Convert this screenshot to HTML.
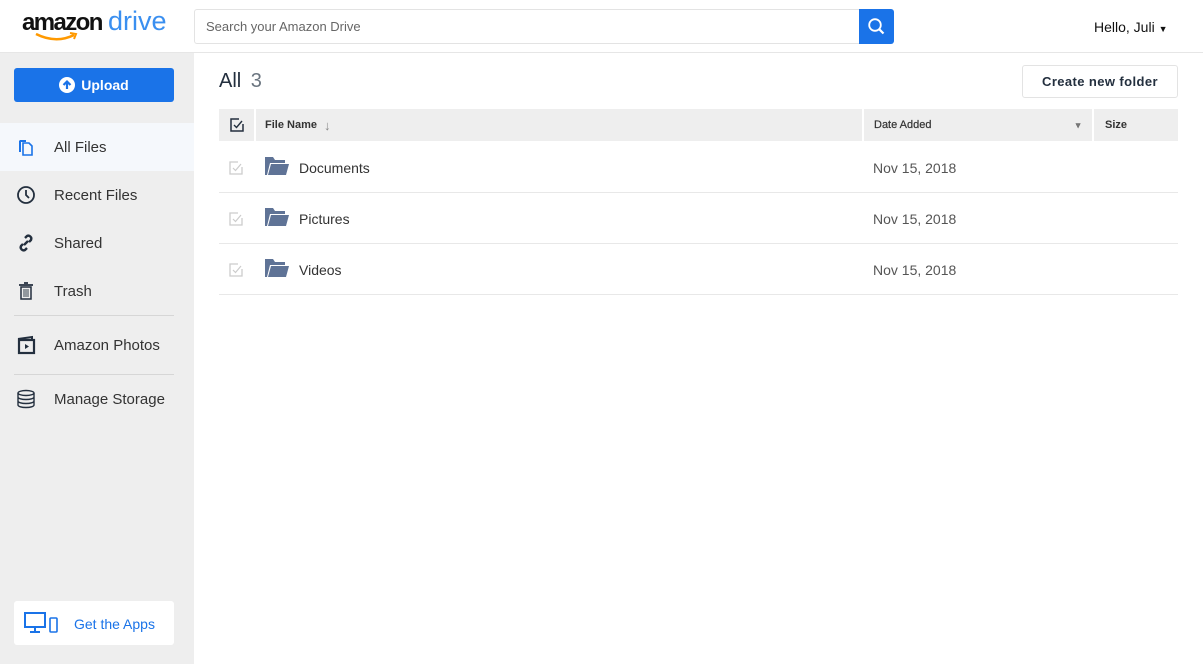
<!DOCTYPE html>
<html><head><meta charset="utf-8"><style>
*{box-sizing:border-box;margin:0;padding:0}
body{width:1203px;height:664px;overflow:hidden;font-family:"Liberation Sans",Arial,sans-serif;background:#fff;position:relative;color:#232f3e}
.abs{position:absolute}
#hdr{left:0;top:0;width:1203px;height:53px;border-bottom:1px solid #e6e6e6;background:#fff}
#side{left:0;top:53px;width:194px;height:611px;background:#eeeeee}
.nav{position:absolute;left:0;width:194px;height:48px;display:flex;align-items:center;font-size:15px;color:#333}
.nav svg{position:absolute;left:16px}
.nav span{position:absolute;left:54px}
.th{position:absolute;top:109px;height:32px;background:#eeeeee;font-size:11px;font-weight:bold;color:#333;display:flex;align-items:center}
.row{position:absolute;left:219px;width:959px;height:51px;border-bottom:1px solid #e8e8e8;font-size:14px;color:#333}
.row .cb{position:absolute;left:10px;top:19px}
.row .fo{position:absolute;left:45px;top:14px}
.row .nm{position:absolute;left:80px;top:18px}
.row .dt{position:absolute;left:654px;top:18px;color:#555}
</style></head><body>
<div id="hdr" class="abs">
 <div class="abs" style="left:22px;top:9px;font-size:24px;font-weight:bold;color:#111;letter-spacing:-1.6px">amazon</div>
 <div class="abs" style="left:108px;top:6px;font-size:27px;color:#3a8ff0">drive</div>
 <svg class="abs" style="left:34px;top:31px" width="46" height="12" viewBox="0 0 46 12"><path d="M2 3 Q22 13 40 4" stroke="#f90" stroke-width="2.5" fill="none"/><path d="M36 2 L42 3 L40 8" stroke="#f90" stroke-width="2" fill="none"/></svg>
 <div class="abs" style="left:194px;top:9px;width:666px;height:35px;border:1px solid #e3e3e3;border-radius:3px 0 0 3px;font-size:13px;color:#666;padding:9px 0 0 11px">Search your Amazon Drive</div>
 <div class="abs" style="left:859px;top:9px;width:35px;height:35px;background:#1a73e8;border-radius:0 3px 3px 0"><svg width="35" height="35" viewBox="0 0 35 35"><circle cx="16" cy="16" r="5.8" stroke="#fff" stroke-width="1.8" fill="none"/><path d="M20.2 20.2 L24.5 24.5" stroke="#fff" stroke-width="2.2"/></svg></div>
 <div class="abs" style="left:1094px;top:19px;font-size:14px;color:#111">Hello, Juli <span style="font-size:9px">▼</span></div>
</div>
<div id="side" class="abs">
 <div class="abs" style="left:14px;top:15px;width:160px;height:34px;background:#1a73e8;border-radius:3px;color:#fff;font-weight:bold;font-size:14px;display:flex;align-items:center;justify-content:center">
  <svg width="16" height="16" viewBox="0 0 16 16" style="margin-right:6px"><circle cx="8" cy="8" r="8" fill="#fff"/><path d="M8 12V5M4.5 8 8 4.5 11.5 8" stroke="#1a73e8" stroke-width="2.2" fill="none"/></svg>Upload</div>
 <div class="nav" style="top:70px;background:#f5f8fc"><svg width="20" height="20" viewBox="0 0 20 20"><path d="M4 3h6v2H5v10H3V4z" fill="#1a73e8"/><path d="M7 6h6l3 3v9H7z" stroke="#1a73e8" stroke-width="1.6" fill="none"/></svg><span>All Files</span></div>
 <div class="nav" style="top:118px"><svg width="20" height="20" viewBox="0 0 20 20"><circle cx="10" cy="10" r="8" stroke="#232f3e" stroke-width="1.8" fill="none"/><path d="M10 5v5l3 3" stroke="#232f3e" stroke-width="1.8" fill="none"/></svg><span>Recent Files</span></div>
 <div class="nav" style="top:166px"><svg width="20" height="20" viewBox="0 0 20 20"><path d="M8 12l4-4M9 5l2-2a3 3 0 014 4l-2 2M11 15l-2 2a3 3 0 01-4-4l2-2" stroke="#232f3e" stroke-width="2.4" fill="none"/></svg><span>Shared</span></div>
 <div class="nav" style="top:214px"><svg width="20" height="20" viewBox="0 0 20 20"><path d="M3 4h14M8 2h4" stroke="#232f3e" stroke-width="1.8"/><path d="M5 6h10v12H5z" stroke="#232f3e" stroke-width="1.5" fill="none"/><path d="M8 8v8M10 8v8M12 8v8" stroke="#232f3e" stroke-width="0.9"/></svg><span>Trash</span></div>
 <div class="abs" style="left:14px;top:262px;width:160px;height:1px;background:#d6d6d6"></div>
 <div class="nav" style="top:268px"><svg width="20" height="20" viewBox="0 0 20 20"><path d="M2 4l14-2v2" stroke="#232f3e" stroke-width="2" fill="none"/><rect x="3" y="5" width="15" height="13" stroke="#232f3e" stroke-width="2.2" fill="none"/><path d="M9 9v5l4-2.5z" fill="#232f3e"/></svg><span>Amazon Photos</span></div>
 <div class="abs" style="left:14px;top:321px;width:160px;height:1px;background:#d6d6d6"></div>
 <div class="nav" style="top:322px"><svg width="20" height="20" viewBox="0 0 20 20"><ellipse cx="10" cy="4" rx="8" ry="2.5" stroke="#232f3e" stroke-width="1.4" fill="none"/><path d="M2 4v12c0 1.4 3.6 2.5 8 2.5s8-1.1 8-2.5V4M2 8c0 1.4 3.6 2.5 8 2.5s8-1.1 8-2.5M2 12c0 1.4 3.6 2.5 8 2.5s8-1.1 8-2.5" stroke="#232f3e" stroke-width="1.4" fill="none"/></svg><span>Manage Storage</span></div>
 <div class="abs" style="left:14px;top:548px;width:160px;height:44px;background:#fff;border-radius:3px">
  <svg class="abs" style="left:10px;top:11px" width="36" height="22" viewBox="0 0 36 22"><rect x="1" y="1" width="20" height="14" stroke="#1a73e8" stroke-width="2" fill="none"/><path d="M11 15v4M6 20h10" stroke="#1a73e8" stroke-width="2"/><rect x="26" y="6" width="7" height="14" rx="1" stroke="#1a73e8" stroke-width="1.6" fill="none"/></svg>
  <div class="abs" style="left:60px;top:15px;font-size:14px;color:#1a73e8">Get the Apps</div>
 </div>
</div>
<div class="abs" style="left:219px;top:70px;font-size:20px;color:#232f3e">All <span style="color:#6b7580;margin-left:4px">3</span></div>
<div class="abs" style="left:1022px;top:65px;width:156px;height:33px;border:1px solid #e3e3e3;border-radius:3px;font-size:13px;font-weight:bold;color:#232f3e;letter-spacing:.4px;display:flex;align-items:center;justify-content:center">Create new folder</div>
<div class="th" style="left:219px;width:35px;justify-content:center"><svg width="14" height="14" viewBox="0 0 14 14"><path d="M9 1H1v12h12V6" stroke="#232f3e" stroke-width="1.5" fill="none"/><path d="M4 7l2.5 2.5L12 3" stroke="#232f3e" stroke-width="1.4" fill="none"/></svg></div>
<div class="th" style="left:256px;width:606px;padding-left:9px">File Name <span style="font-weight:normal;color:#888;font-size:13px;margin-left:7px">↓</span></div>
<div class="th" style="left:864px;width:228px;padding-left:10px;font-weight:normal;color:#333;font-size:11px;-webkit-text-stroke:.2px #333">Date Added<span style="position:absolute;right:10px;color:#777;font-size:8px">▼</span></div>
<div class="th" style="left:1094px;width:84px;padding-left:11px">Size</div>
<div class="row" style="top:142px"><svg class="cb" width="14" height="14" viewBox="0 0 14 14"><path d="M9 1H1v12h12V6" stroke="#ccc" stroke-width="1.3" fill="none"/><path d="M4 7l2.5 2.5L12 3" stroke="#ccc" stroke-width="1.2" fill="none"/></svg><svg class="fo" width="26" height="20" viewBox="0 0 26 20"><path d="M1 1h8l2 3h10v3H6L3 19H1z" fill="#5f7396"/><path d="M7 8h18l-3 11H4z" fill="#5f7396"/></svg><div class="nm">Documents</div><div class="dt">Nov 15, 2018</div></div>
<div class="row" style="top:193px"><svg class="cb" width="14" height="14" viewBox="0 0 14 14"><path d="M9 1H1v12h12V6" stroke="#ccc" stroke-width="1.3" fill="none"/><path d="M4 7l2.5 2.5L12 3" stroke="#ccc" stroke-width="1.2" fill="none"/></svg><svg class="fo" width="26" height="20" viewBox="0 0 26 20"><path d="M1 1h8l2 3h10v3H6L3 19H1z" fill="#5f7396"/><path d="M7 8h18l-3 11H4z" fill="#5f7396"/></svg><div class="nm">Pictures</div><div class="dt">Nov 15, 2018</div></div>
<div class="row" style="top:244px"><svg class="cb" width="14" height="14" viewBox="0 0 14 14"><path d="M9 1H1v12h12V6" stroke="#ccc" stroke-width="1.3" fill="none"/><path d="M4 7l2.5 2.5L12 3" stroke="#ccc" stroke-width="1.2" fill="none"/></svg><svg class="fo" width="26" height="20" viewBox="0 0 26 20"><path d="M1 1h8l2 3h10v3H6L3 19H1z" fill="#5f7396"/><path d="M7 8h18l-3 11H4z" fill="#5f7396"/></svg><div class="nm">Videos</div><div class="dt">Nov 15, 2018</div></div>
</body></html>
